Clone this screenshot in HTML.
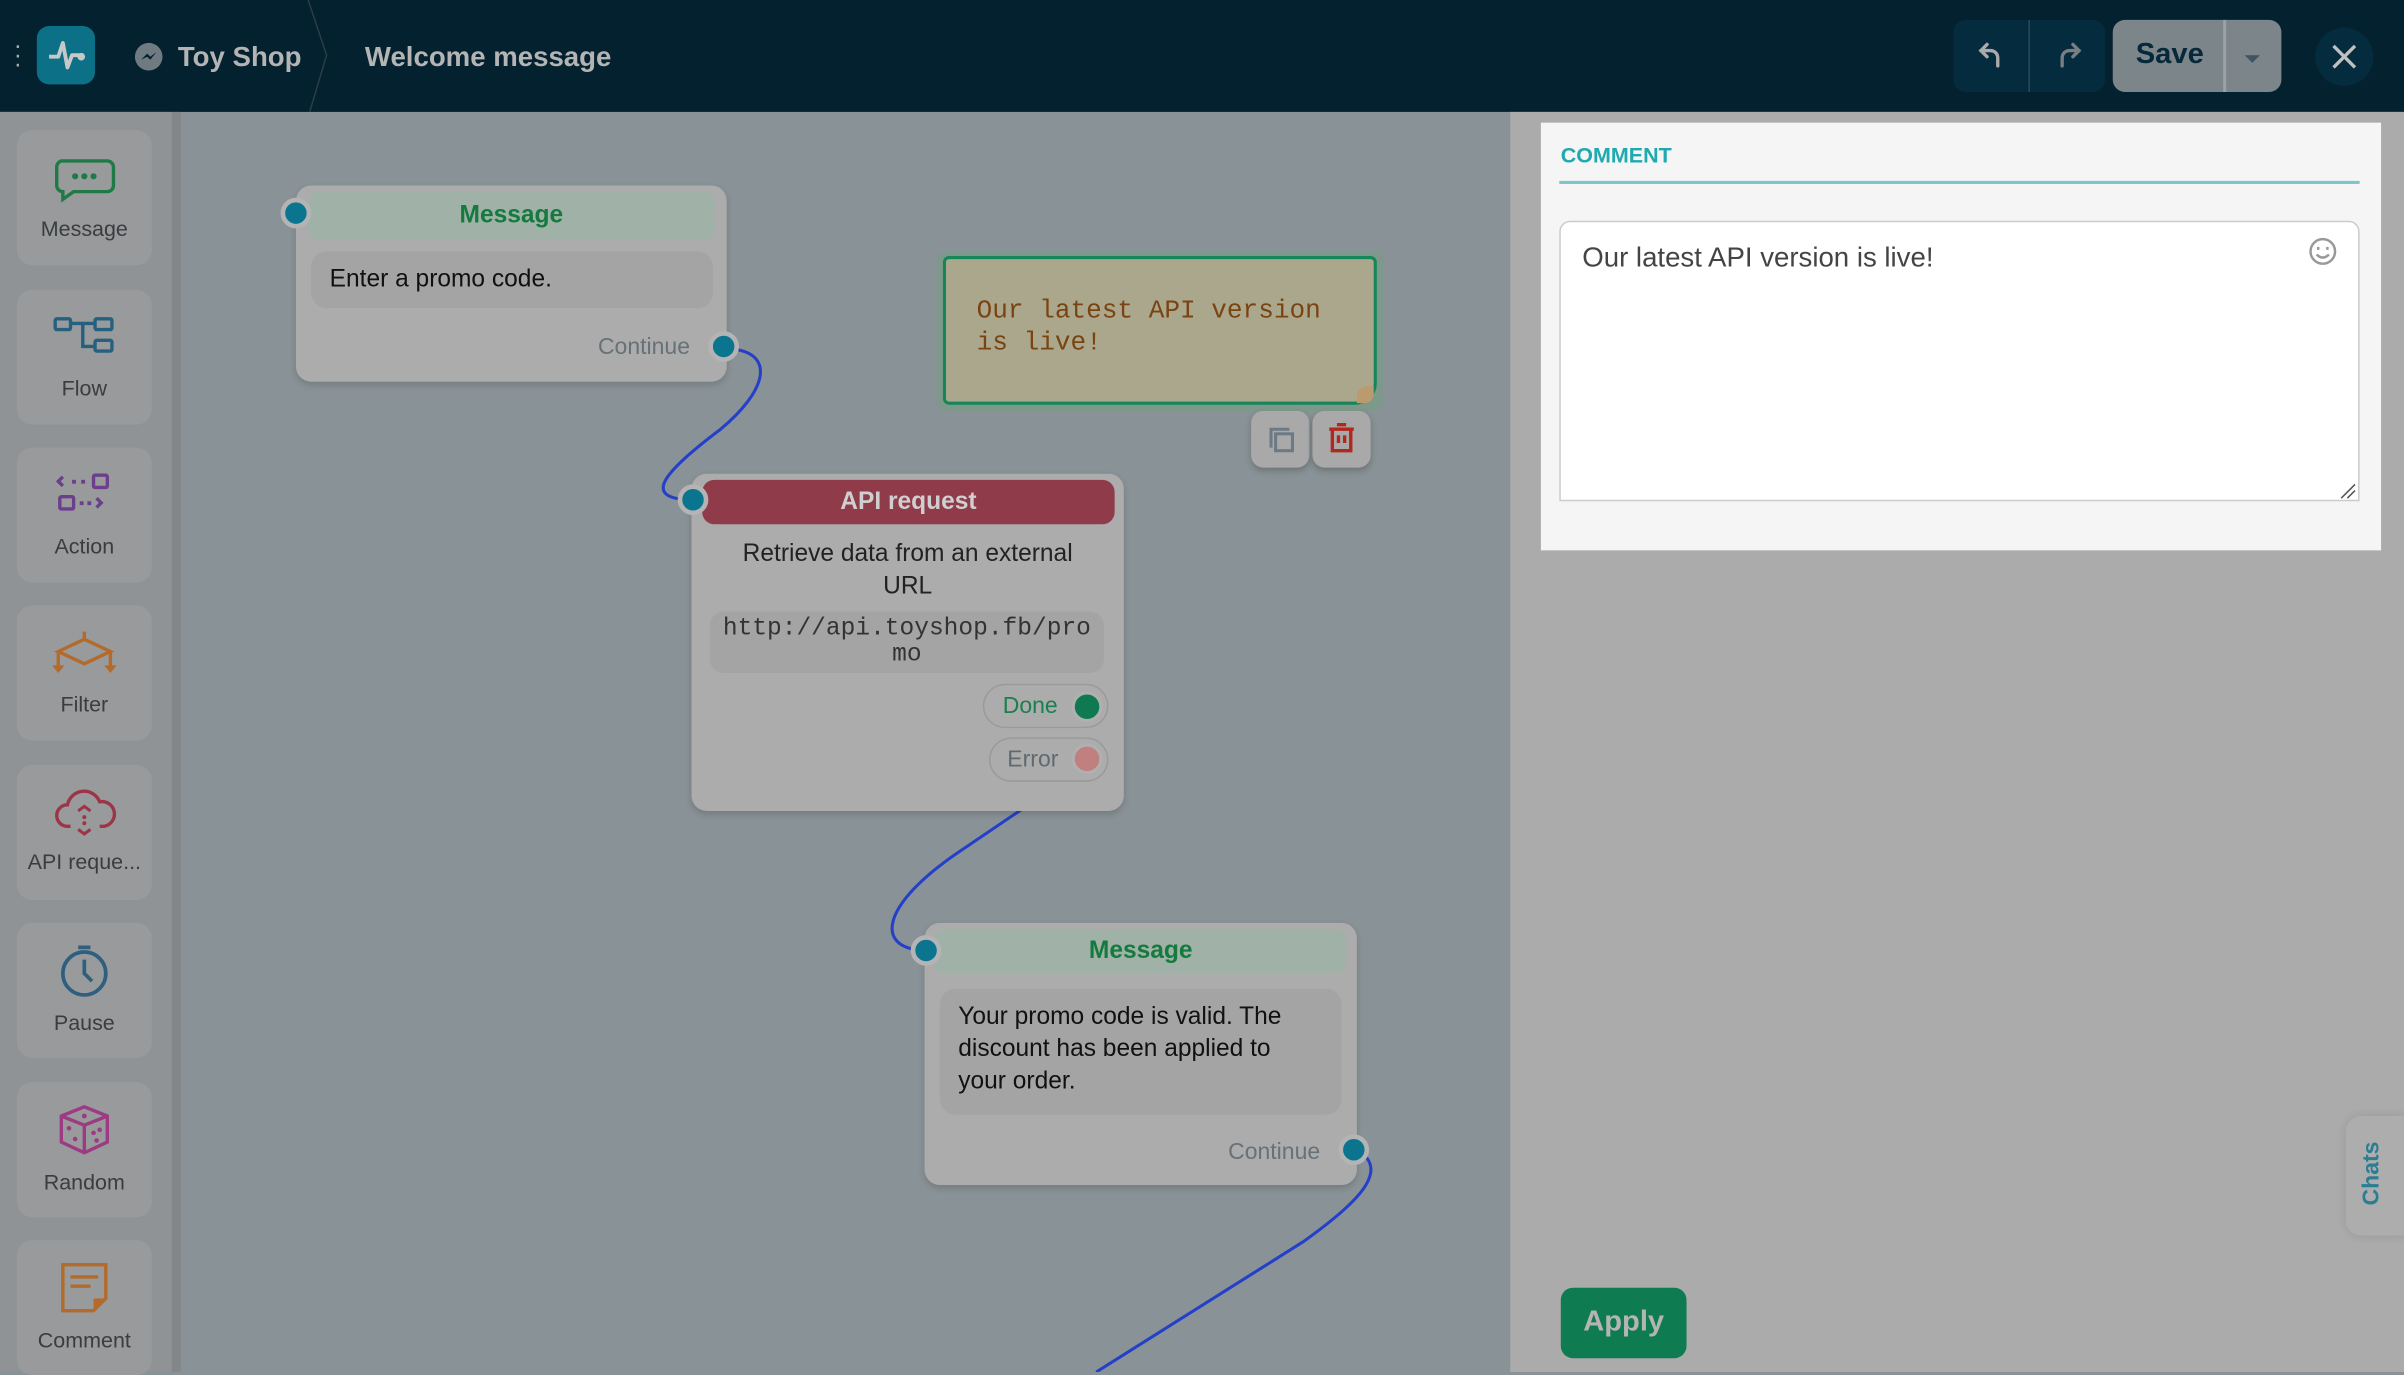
<!DOCTYPE html>
<html><head><meta charset="utf-8"><style>
*{box-sizing:border-box;margin:0;padding:0}
html,body{width:2404px;height:1372px;overflow:hidden;background:#899296;font-family:"Liberation Sans",sans-serif}
#w{position:absolute;left:0;top:0;width:1568px;height:895px;transform:scale(1.5332,1.533);transform-origin:0 0;background:#899296}
.abs{position:absolute}
.hdr{left:0;top:0;width:1568px;height:73px;background:#03212f}
.side{left:0;top:73px;width:112px;height:822px;background:#909395}
.sb{left:112px;top:73px;width:6px;height:822px;background:#848789}
.it{position:absolute;left:11px;width:88px;height:88px;background:#989a9b;border-radius:10px;text-align:center;font-size:14px;color:#3a3d40}
.it svg{display:block;margin:16px auto 8px}
.node{background:#acacac;border-radius:10px;box-shadow:0 2px 4px rgba(0,0,0,.15)}
.dot{position:absolute;width:20px;height:20px;border-radius:50%;background:#0b7590;border:3px solid #b4b4b4}
.txt{background:#a4a4a4;border-radius:10px;color:#111;font-size:16px;padding:8px 12px;line-height:21px}
.rp{left:985px;top:73px;width:583px;height:822px;background:#aaabaa}
</style></head><body><div id="w">
<div class="abs hdr">
 <div class="abs" style="left:9px;top:28px;color:#aaa;font-size:16px;line-height:6px">·<br>·<br>·</div>
 <div class="abs" style="left:24px;top:17px;width:38px;height:38px;border-radius:8px;background:#0c7187"></div>
 <svg class="abs" style="left:24px;top:17px" width="38" height="38"><path d="M8 20h6l3-9 3 16 3-8h5" stroke="#c8c8c8" stroke-width="2.5" fill="none" stroke-linejoin="round"/><circle cx="29" cy="20" r="2.5" fill="#c8c8c8"/></svg>
 <svg class="abs" style="left:87px;top:27px" width="20" height="20"><circle cx="10" cy="10" r="9" fill="#6f7b80"/><path d="M5 12l4-4 2 2 4-3-4 5-2-2z" fill="#03212f"/></svg>
 <div class="abs" style="left:116px;top:27px;color:#b4b4b4;font-size:18px;font-weight:bold">Toy Shop</div>
 <svg class="abs" style="left:200px;top:0" width="24" height="73"><path d="M1 0L13 36 2 73" stroke="#2a3d48" fill="none"/></svg>
 <div class="abs" style="left:238px;top:27px;color:#b4b4b4;font-size:18px;font-weight:bold">Welcome message</div>
 <div class="abs" style="left:1274px;top:13px;width:99px;height:47px;border-radius:8px;background:#052c3e"></div>
 <div class="abs" style="left:1323px;top:13px;width:1px;height:47px;background:#2a4958"></div>
 <svg class="abs" style="left:1287px;top:24px" width="24" height="24"><path d="M16 19v-5c0-3-2-5-5-5H5M9 5L5 9l4 4" stroke="#aaa" stroke-width="2.2" fill="none" stroke-linecap="round"/></svg>
 <svg class="abs" style="left:1337px;top:24px" width="24" height="24"><path d="M8 19v-5c0-3 2-5 5-5h6M15 5l4 4-4 4" stroke="#777f82" stroke-width="2.2" fill="none" stroke-linecap="round"/></svg>
 <div class="abs" style="left:1378px;top:13px;width:110px;height:47px;border-radius:8px;background:#7c858a"></div>
 <div class="abs" style="left:1450px;top:13px;width:2px;height:47px;background:#9aa2a6"></div>
 <div class="abs" style="left:1393px;top:25px;color:#05283a;font-size:19px;font-weight:bold">Save</div>
 <div class="abs" style="left:1464px;top:36px;border:5px solid transparent;border-top-color:#415560"></div>
 <div class="abs" style="left:1510px;top:18px;width:38px;height:38px;border-radius:50%;background:#052c3e"></div>
 <svg class="abs" style="left:1518px;top:26px" width="22" height="22"><path d="M4 4l14 14M18 4L4 18" stroke="#c0c0c0" stroke-width="2.2"/></svg>
</div>
<div class="abs side"></div><div class="abs sb"></div>
<div class="it" style="top:85px"><svg width="42" height="32"><path d="M6 4h30a4 4 0 0 1 4 4v12a4 4 0 0 1-4 4H14l-7 5v-5a4 4 0 0 1-4-4V8a4 4 0 0 1 3-4z" stroke="#1f7a47" stroke-width="2.2" fill="none"/><circle cx="15" cy="14" r="2" fill="#1f7a47"/><circle cx="21" cy="14" r="2" fill="#1f7a47"/><circle cx="27" cy="14" r="2" fill="#1f7a47"/></svg>Message</div>
<div class="it" style="top:189px"><svg width="42" height="32"><g stroke="#25607f" stroke-width="2.2" fill="none"><rect x="2" y="3" width="10" height="7" rx="1"/><rect x="28" y="3" width="11" height="7" rx="1"/><rect x="28" y="17" width="11" height="7" rx="1"/><path d="M12 6h16M20 6v15h8"/></g></svg>Flow</div>
<div class="it" style="top:292px"><svg width="42" height="32"><g stroke="#6b3f8c" stroke-width="2.2" fill="none"><path d="M7 3l-3 3 3 3M29 23l3-3-3-3"/><rect x="27" y="2" width="9" height="8" rx="1"/><rect x="5" y="16" width="9" height="8" rx="1"/></g><g fill="#6b3f8c"><rect x="13" y="5" width="2.5" height="2.5"/><rect x="19" y="5" width="2.5" height="2.5"/><rect x="18" y="19" width="2.5" height="2.5"/><rect x="23" y="19" width="2.5" height="2.5"/></g></svg>Action</div>
<div class="it" style="top:395px"><svg width="48" height="32"><g stroke="#b36a2a" stroke-width="2.2" fill="none"><path d="M24 1v5M24 6L7 14l17 8 17-8z"/><path d="M7 14v10M41 14v10"/></g><path d="M3 23h8l-4 5zM37 23h8l-4 5z" fill="#b36a2a"/></svg>Filter</div>
<div class="it" style="top:499px"><svg width="42" height="36" style="margin:13px auto 6px"><path d="M12 27h-2a7 7 0 0 1 0-14 11 11 0 0 1 21-2 8 8 0 0 1 3 16h-3" stroke="#9c3548" stroke-width="2.2" fill="none"/><path d="M17 17l4-3 4 3M17 29l4 3 4-3" stroke="#9c3548" stroke-width="2" fill="none"/><circle cx="21" cy="21" r="1.3" fill="#9c3548"/><circle cx="21" cy="25" r="1.3" fill="#9c3548"/></svg>API reque...</div>
<div class="it" style="top:602px"><svg width="42" height="36" style="margin:13px auto 8px"><circle cx="21" cy="20" r="14" stroke="#2e5f80" stroke-width="2.4" fill="none"/><path d="M17 3h8M21 11v9l5 5" stroke="#2e5f80" stroke-width="2.4" fill="none"/></svg>Pause</div>
<div class="it" style="top:706px"><svg width="42" height="36" style="margin:13px auto 8px"><path d="M21 3l15 6v17l-15 7-15-7V9z M6 9l15 6 15-6M21 15v18" stroke="#9c3a84" stroke-width="2.2" fill="none"/><g fill="#9c3a84"><circle cx="21" cy="9" r="1.6"/><circle cx="11" cy="17" r="1.5"/><circle cx="15" cy="24" r="1.5"/><circle cx="27" cy="20" r="1.5"/><circle cx="31" cy="18" r="1.5"/><circle cx="29" cy="25" r="1.5"/></g></svg>Random</div>
<div class="it" style="top:809px"><svg width="42" height="36" style="margin:13px auto 8px"><path d="M7 3h28v22l-8 8H7z" stroke="#b36a2a" stroke-width="2.2" fill="none"/><path d="M27 33v-8h8z" fill="#b36a2a"/><path d="M12 11h18M12 17h13" stroke="#b36a2a" stroke-width="2.2"/></svg>Comment</div>

<svg class="abs" style="left:0;top:0" width="985" height="895"><g fill="none" stroke="#2540c8" stroke-width="2"><path d="M480 228C505 232 500 255 470 280C430 310 420 325 450 326"/><path d="M713 459C742 466 733 484 690 512L625 556C575 590 570 618 602 620"/><path d="M888 752C905 765 885 785 850 810L715 895"/></g><path d="M708 494C700 500 690 510 670 525" stroke="#bfc5e0" stroke-width="1.5" fill="none"/></svg>

<div class="abs node" style="left:193px;top:121px;width:281px;height:128px">
 <div class="abs" style="left:8px;top:4px;width:265px;height:31px;background:#a0b2a8;border-radius:6px;color:#147a3d;font-weight:bold;font-size:16px;text-align:center;line-height:31px">Message</div>
 <div class="abs txt" style="left:10px;top:43px;width:262px;height:37px">Enter a promo code.</div>
 <div class="abs" style="left:197px;top:97px;color:#667278;font-size:15px">Continue</div>
</div>
<div class="dot" style="left:183px;top:129px"></div>
<div class="dot" style="left:462px;top:216px"></div>

<div class="abs" style="left:611px;top:164px;width:291px;height:104px;border-radius:6px;background:#7c998a"></div>
<div class="abs" style="left:615px;top:167px;width:283px;height:97px;border:2px solid #15865a;border-radius:4px 4px 14px 4px;background:#aba78d;font-family:'Liberation Mono',monospace;color:#7a4412;font-size:17px;line-height:21px;padding:24px 20px">Our latest API version is live!</div>
<div class="abs" style="left:885px;top:252px;width:11px;height:11px;background:#bb9a70;border-radius:6px 0 6px 0"></div>
<div class="abs" style="left:816px;top:268px;width:38px;height:37px;border-radius:8px;background:#a9a9a9;box-shadow:0 2px 4px rgba(0,0,0,.2)"></div>
<svg class="abs" style="left:826px;top:277px" width="20" height="20"><path d="M3 15V3h12" stroke="#6c7a86" stroke-width="2" fill="none"/><rect x="6" y="6" width="11" height="11" stroke="#6c7a86" stroke-width="2" fill="none"/></svg>
<div class="abs" style="left:856px;top:268px;width:38px;height:37px;border-radius:8px;background:#a9a9a9;box-shadow:0 2px 4px rgba(0,0,0,.2)"></div>
<svg class="abs" style="left:865px;top:275px" width="20" height="22"><path d="M7 2h6M2 5h16M4 5v14h12V5M8 9v5M12 9v5" stroke="#b0281e" stroke-width="2.2" fill="none"/></svg>

<div class="abs node" style="left:451px;top:309px;width:282px;height:220px">
 <div class="abs" style="left:7px;top:4px;width:269px;height:29px;background:#8f3b49;border-radius:8px;color:#cfcfcf;font-weight:bold;font-size:16px;text-align:center;line-height:29px">API request</div>
 <div class="abs" style="left:0;top:42px;width:282px;text-align:center;color:#222;font-size:16px;line-height:21px">Retrieve data from an external<br>URL</div>
 <div class="abs" style="left:12px;top:90px;width:257px;height:40px;background:#a4a4a4;border-radius:9px;font-family:'Liberation Mono',monospace;font-size:16px;color:#333;text-align:center;line-height:17px;padding-top:3px">http://api.toyshop.fb/pro<br>mo</div>
 <div class="abs" style="left:190px;top:137px;width:82px;height:29px;border:1px solid #9a9a9a;border-radius:15px;color:#1a8050;font-size:15px;line-height:27px;padding-left:12px">Done</div>
 <div class="abs" style="left:194px;top:172px;width:78px;height:29px;border:1px solid #9a9a9a;border-radius:15px;color:#5f6a70;font-size:15px;line-height:27px;padding-left:11px">Error</div>
 <div class="abs" style="left:248px;top:142px;width:20px;height:20px;border-radius:50%;background:#0f7a52;border:2px solid #b0b0b0"></div>
 <div class="abs" style="left:248px;top:176px;width:20px;height:20px;border-radius:50%;background:#c08080;border:2px solid #b0b0b0"></div>
</div>
<div class="dot" style="left:442px;top:316px"></div>

<div class="abs node" style="left:603px;top:602px;width:282px;height:171px">
 <div class="abs" style="left:7px;top:4px;width:268px;height:29px;background:#a0b2a8;border-radius:6px;color:#147a3d;font-weight:bold;font-size:16px;text-align:center;line-height:29px">Message</div>
 <div class="abs txt" style="left:10px;top:43px;width:262px;height:82px">Your promo code is valid. The discount has been applied to your order.</div>
 <div class="abs" style="left:198px;top:141px;color:#667278;font-size:15px">Continue</div>
</div>
<div class="dot" style="left:594px;top:610px"></div>
<div class="dot" style="left:873px;top:740px"></div>

<div class="abs rp"></div>
<div class="abs" style="left:1005px;top:80px;width:548px;height:279px;background:#f4f5f4">
 <div class="abs" style="left:13px;top:13px;color:#1eaab0;font-size:14px;font-weight:bold">COMMENT</div>
 <div class="abs" style="left:12px;top:38px;width:522px;height:2px;background:#7cc5ca"></div>
 <div class="abs" style="left:12px;top:64px;width:522px;height:183px;background:#fff;border:1px solid #ccc;border-radius:7px 7px 0 0;font-size:18px;color:#444;padding:13px 14px">Our latest API version is live!</div>
 <svg class="abs" style="left:500px;top:74px" width="20" height="20"><circle cx="10" cy="10" r="8" stroke="#999" stroke-width="1.6" fill="none"/><path d="M7 7v2M13 7v2" stroke="#999" stroke-width="1.6"/><path d="M6 12q4 4 8 0" stroke="#999" stroke-width="1.6" fill="none"/></svg>
 <svg class="abs" style="left:520px;top:234px" width="12" height="12"><path d="M2 11L11 2M6 11l5-5" stroke="#555"/></svg>
</div>
<div class="abs" style="left:1018px;top:840px;width:82px;height:46px;border-radius:8px;background:#0e7b51;color:#b4b4b4;font-size:19px;font-weight:bold;text-align:center;line-height:46px">Apply</div>
<div class="abs" style="left:1530px;top:728px;width:40px;height:78px;border-radius:10px 0 0 10px;background:#acadac;box-shadow:0 0 6px rgba(0,0,0,.1)"></div>
<div class="abs" style="left:1526px;top:757px;color:#2a7d93;font-size:15px;font-weight:bold;transform:rotate(-90deg);transform-origin:center">Chats</div>
</div></body></html>
